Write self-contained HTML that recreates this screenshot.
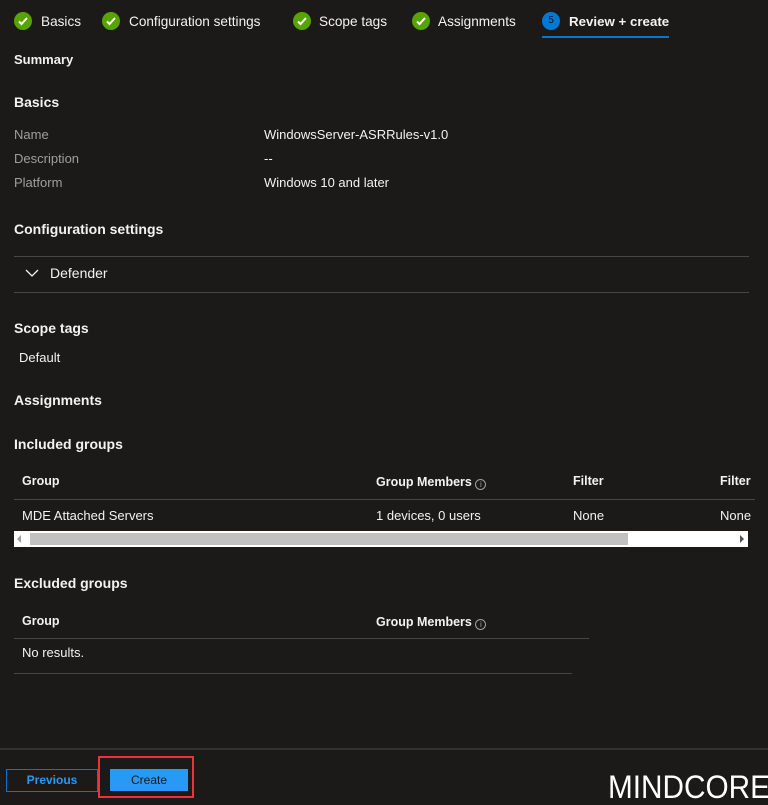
<!DOCTYPE html>
<html><head><meta charset="utf-8"><style>
*{margin:0;padding:0;box-sizing:border-box}
body{width:768px;height:798px;background:#1b1a19;color:#f3f2f1;font-family:"Liberation Sans",sans-serif;font-size:13px;position:relative;overflow:hidden}
.a{position:absolute;white-space:nowrap;line-height:16px}
.b{font-weight:bold}
.l{color:#a19f9d}
.t{font-size:13.6px;top:14px}
.chk{position:absolute;width:18px;height:18px;border-radius:50%;background:#57a300;top:12px}
.chk svg{position:absolute;left:3px;top:3px}
.hl{position:absolute;height:1px;background:#484644}
.th{font-size:12.5px}
</style></head><body>
<div class="chk" style="left:14px"><svg width="12" height="12"><path d="M2 6.5l2.5 2.5 5.5-6" stroke="#fff" stroke-width="2" fill="none"/></svg></div>
<div class="a t" style="left:41px">Basics</div>
<div class="chk" style="left:102px"><svg width="12" height="12"><path d="M2 6.5l2.5 2.5 5.5-6" stroke="#fff" stroke-width="2" fill="none"/></svg></div>
<div class="a t" style="left:129px">Configuration settings</div>
<div class="chk" style="left:293px"><svg width="12" height="12"><path d="M2 6.5l2.5 2.5 5.5-6" stroke="#fff" stroke-width="2" fill="none"/></svg></div>
<div class="a t" style="left:319px">Scope tags</div>
<div class="chk" style="left:412px"><svg width="12" height="12"><path d="M2 6.5l2.5 2.5 5.5-6" stroke="#fff" stroke-width="2" fill="none"/></svg></div>
<div class="a t" style="left:438px">Assignments</div>
<div style="position:absolute;left:542px;top:12px;width:18px;height:18px;border-radius:50%;background:#0078d4;color:#111;font-size:10px;text-align:center;line-height:18px">5</div>
<div class="a b t" style="left:569px;font-size:13.3px">Review + create</div>
<div style="position:absolute;left:542px;top:36px;width:127px;height:2px;background:#0078d4"></div>

<div class="a b" style="left:14px;top:52px">Summary</div>
<div class="a b" style="left:14px;top:94px;font-size:14px">Basics</div>
<div class="a l" style="left:14px;top:127px">Name</div>
<div class="a" style="left:264px;top:127px">WindowsServer-ASRRules-v1.0</div>
<div class="a l" style="left:14px;top:151px">Description</div>
<div class="a" style="left:264px;top:151px">--</div>
<div class="a l" style="left:14px;top:175px">Platform</div>
<div class="a" style="left:264px;top:175px">Windows 10 and later</div>

<div class="a b" style="left:14px;top:221px;font-size:14px">Configuration settings</div>
<div class="hl" style="left:14px;top:256px;width:735px"></div>
<svg style="position:absolute;left:25px;top:268px" width="14" height="10"><path d="M1 2l6 6 6-6" stroke="#f3f2f1" stroke-width="1.3" fill="none"/></svg>
<div class="a" style="left:50px;top:265px;font-size:14px">Defender</div>
<div class="hl" style="left:14px;top:292px;width:735px"></div>

<div class="a b" style="left:14px;top:320px;font-size:14px">Scope tags</div>
<div class="a" style="left:19px;top:350px">Default</div>
<div class="a b" style="left:14px;top:392px;font-size:14px">Assignments</div>
<div class="a b" style="left:14px;top:436px;font-size:14px">Included groups</div>

<div class="a b th" style="left:22px;top:473px">Group</div>
<div class="a b th" style="left:376px;top:474px">Group Members <span style="display:inline-block;width:11px;height:11px;border:1px solid #a19f9d;border-radius:50%;font-size:8px;line-height:9px;text-align:center;color:#a19f9d;font-weight:normal;vertical-align:-1px">i</span></div>
<div class="a b th" style="left:573px;top:473px">Filter</div>
<div class="a b th" style="left:720px;top:473px">Filter</div>
<div class="hl" style="left:14px;top:499px;width:741px"></div>
<div class="a" style="left:22px;top:508px">MDE Attached Servers</div>
<div class="a" style="left:376px;top:508px">1 devices, 0 users</div>
<div class="a" style="left:573px;top:508px">None</div>
<div class="a" style="left:720px;top:508px">None</div>
<div style="position:absolute;left:14px;top:531px;width:734px;height:16px;background:#fff"></div>
<div style="position:absolute;left:30px;top:533px;width:598px;height:12px;background:#c1c1c1"></div>
<div style="position:absolute;left:17px;top:535px;width:0;height:0;border-top:4px solid transparent;border-bottom:4px solid transparent;border-right:4px solid #a0a0a0"></div>
<div style="position:absolute;left:740px;top:535px;width:0;height:0;border-top:4px solid transparent;border-bottom:4px solid transparent;border-left:4px solid #505050"></div>

<div class="a b" style="left:14px;top:575px;font-size:14px">Excluded groups</div>
<div class="a b th" style="left:22px;top:613px">Group</div>
<div class="a b th" style="left:376px;top:614px">Group Members <span style="display:inline-block;width:11px;height:11px;border:1px solid #a19f9d;border-radius:50%;font-size:8px;line-height:9px;text-align:center;color:#a19f9d;font-weight:normal;vertical-align:-1px">i</span></div>
<div class="hl" style="left:14px;top:638px;width:575px"></div>
<div class="a" style="left:22px;top:645px">No results.</div>
<div class="hl" style="left:14px;top:673px;width:558px"></div>

<div class="hl" style="left:0;top:748px;width:768px;background:#323130;height:2px"></div>
<div style="position:absolute;left:6px;top:769px;width:92px;height:23px;border:1px solid #0078d4;color:#2899f5;font-weight:bold;font-size:12px;text-align:center;line-height:21px">Previous</div>
<div style="position:absolute;left:98px;top:756px;width:96px;height:42px;border:2px solid #e8353a"></div>
<div style="position:absolute;left:110px;top:769px;width:78px;height:22px;background:#2899f5;color:#1b1a19;font-size:12px;text-align:center;line-height:22px">Create</div>
<div class="a" style="left:608px;top:771px;font-size:32px;line-height:32px;color:#fff;transform:scaleX(0.93);transform-origin:left">MINDCORE</div>
</body></html>
